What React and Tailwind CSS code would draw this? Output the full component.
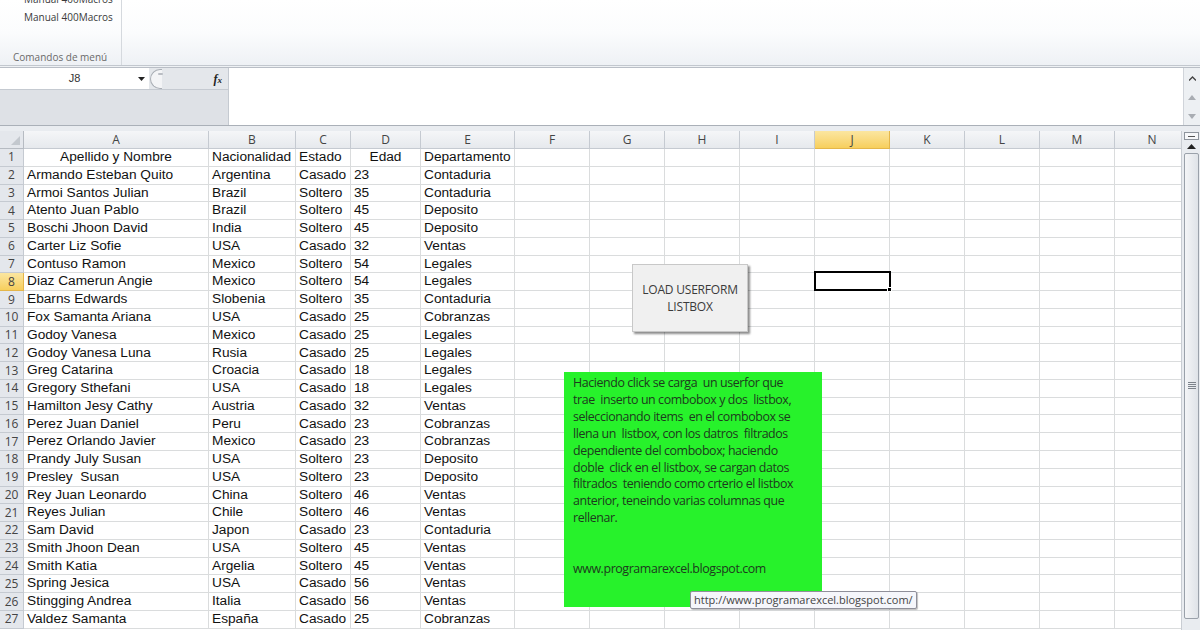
import React from "react";

const data = [
  ["Armando Esteban Quito", "Argentina", "Casado", "23", "Contaduria"],
  ["Armoi Santos Julian", "Brazil", "Soltero", "35", "Contaduria"],
  ["Atento Juan Pablo", "Brazil", "Soltero", "45", "Deposito"],
  ["Boschi Jhoon David", "India", "Soltero", "45", "Deposito"],
  ["Carter Liz Sofie", "USA", "Casado", "32", "Ventas"],
  ["Contuso Ramon", "Mexico", "Soltero", "54", "Legales"],
  ["Diaz Camerun Angie", "Mexico", "Soltero", "54", "Legales"],
  ["Ebarns Edwards", "Slobenia", "Soltero", "35", "Contaduria"],
  ["Fox Samanta Ariana", "USA", "Casado", "25", "Cobranzas"],
  ["Godoy Vanesa", "Mexico", "Casado", "25", "Legales"],
  ["Godoy Vanesa Luna", "Rusia", "Casado", "25", "Legales"],
  ["Greg Catarina", "Croacia", "Casado", "18", "Legales"],
  ["Gregory Sthefani", "USA", "Casado", "18", "Legales"],
  ["Hamilton Jesy Cathy", "Austria", "Casado", "32", "Ventas"],
  ["Perez Juan Daniel", "Peru", "Casado", "23", "Cobranzas"],
  ["Perez Orlando Javier", "Mexico", "Casado", "23", "Cobranzas"],
  ["Prandy July Susan", "USA", "Soltero", "23", "Deposito"],
  ["Presley\u00a0 Susan", "USA", "Soltero", "23", "Deposito"],
  ["Rey Juan Leonardo", "China", "Soltero", "46", "Ventas"],
  ["Reyes Julian", "Chile", "Soltero", "46", "Ventas"],
  ["Sam David", "Japon", "Casado", "23", "Contaduria"],
  ["Smith Jhoon Dean", "USA", "Soltero", "45", "Ventas"],
  ["Smith Katia", "Argelia", "Soltero", "45", "Ventas"],
  ["Spring Jesica", "USA", "Casado", "56", "Ventas"],
  ["Stingging Andrea", "Italia", "Casado", "56", "Ventas"],
  ["Valdez Samanta", "España", "Casado", "25", "Cobranzas"],
];

const cols = ["A", "B", "C", "D", "E", "F", "G", "H", "I", "J", "K", "L", "M", "N"];
const widths = [185, 87, 55, 70, 94, 75, 75, 75, 75, 75, 75, 75, 75, 75];

function Cell({ w, children, align = "left" }) {
  const a = align === "center" ? "justify-center" : "justify-start pl-[3px]";
  return (
    <div
      className={`flex h-full shrink-0 items-center overflow-visible whitespace-nowrap border-r border-b border-[#dadcdd] bg-white ${a}`}
      style={{ width: w }}
    >
      {children}
    </div>
  );
}

export default function App() {
  const header = ["Apellido y Nombre", "Nacionalidad", "Estado", "Edad", "Departamento"];
  return (
    <div
      className="relative h-[630px] w-[1200px] overflow-hidden bg-white"
      style={{ fontFamily: '"Liberation Sans", Arial, sans-serif' }}
    >
      {/* Ribbon */}
      <div className="flex h-[65px] bg-gradient-to-b from-white via-[#fbfcfd] to-[#eef1f5]">
        <div className="relative w-[122px] border-r border-[#d5d9de]" style={{ fontFamily: '"Open Sans", "Liberation Sans", sans-serif' }}>
          <div className="absolute left-[24px] top-[-8px] text-[10px] text-[#3a3a3a]">Manual 400Macros</div>
          <div className="absolute left-[24px] top-[10px] text-[10px] text-[#3a3a3a]">Manual 400Macros</div>
          <div className="absolute left-[13px] top-[50px] text-[10px] text-[#6a6a6a]">Comandos de menú</div>
        </div>
        <div className="flex-1" />
      </div>
      <div className="h-[1px] bg-[#c2c7ce]" />
      <div className="h-[1px] bg-[#eef1f4]" />
      <div className="h-[1px] bg-[#b9bec6]" />

      {/* Formula bar */}
      <div className="flex h-[58px] border-b border-[#aab0b8] bg-[#dfe2e7]">
        <div className="flex w-[229px] flex-col border-r border-[#c5cad1]">
          <div className="flex h-[22px] items-center">
            <div className="relative flex h-full w-[149px] items-center justify-center border-b border-[#c5cad1] bg-white text-[11px] text-[#333]">
              J8
              <svg className="absolute right-[4px] top-[9px]" width="7" height="4" viewBox="0 0 7 4">
                <path d="M0 0h7L3.5 4z" fill="#222" />
              </svg>
            </div>
            <div className="relative flex h-full flex-1 items-center border-b border-[#c5cad1] bg-[#e4e7eb]">
              <div className="ml-[1px] h-[20px] w-[12px] rounded-l-full border-l border-t border-b border-[#a9aeb5] bg-[#f3f4f6]" />
              <div className="absolute left-[9px] top-[5px] h-[2px] w-[5px] rounded-full bg-[#b9bdc3]" />
              <span className="ml-auto mr-[6px] text-[12px] italic font-bold text-[#222]" style={{ fontFamily: '"Liberation Serif", serif' }}>
                f<span className="text-[9px]">x</span>
              </span>
            </div>
          </div>
          <div className="flex-1 bg-[#dee1e6]" />
        </div>
        <div className="flex-1 bg-white" />
        <div className="flex w-[17px] flex-col items-center border-l border-[#d0d4da] bg-[#edf0f3]">
          <svg className="mt-[8px]" width="7" height="5" viewBox="0 0 7 5"><path d="M0 4.5L3.5 1 7 4.5" stroke="#444" strokeWidth="1.4" fill="none" /></svg>
          <svg className="mt-[14px]" width="8" height="5" viewBox="0 0 8 5"><path d="M0 5h8L4 0z" fill="#a9adb3" /></svg>
          <svg className="mt-[14px]" width="8" height="5" viewBox="0 0 8 5"><path d="M0 0h8L4 5z" fill="#a9adb3" /></svg>
        </div>
      </div>
      <div className="h-[5px] bg-[#e9ecf0]" />

      {/* Sheet */}
      <div className="flex">
        <div className="flex-1 overflow-hidden">
          {/* Column header */}
          <div className="flex h-[18px] text-[12px] text-[#444]" style={{ fontFamily: '"Open Sans", "Liberation Sans", sans-serif' }}>
            <div className="relative h-full w-[24px] shrink-0 border-r border-b border-[#b6bbc2] bg-[#e4e7ec]">
              <svg className="absolute bottom-[3px] right-[3px]" width="9" height="9" viewBox="0 0 9 9"><path d="M9 0v9H0z" fill="#c3c8ce" /></svg>
            </div>
            {cols.map((c, i) => (
              <div
                key={c}
                className={`flex h-full shrink-0 items-center justify-center border-r border-b ${
                  c === "J"
                    ? "border-[#e4b64a] bg-gradient-to-b from-[#fbe6a0] to-[#f7cf5c]"
                    : "border-[#c5cad1] bg-gradient-to-b from-[#f5f6f8] to-[#e6e9ed]"
                }`}
                style={{ width: widths[i] }}
              >
                {c}
              </div>
            ))}
          </div>
          {/* Rows */}
          {[header, ...data].map((r, ri) => {
            const n = ri + 1;
            const isHead = ri === 0;
            return (
              <div key={n} className="flex h-[17.77px] text-[13.7px] text-[#111]">
                <div
                  className={`flex h-full w-[24px] shrink-0 items-center justify-center border-r border-b text-[12px] text-[#444] ${
                    n === 8
                      ? "border-[#e4b64a] bg-gradient-to-b from-[#fbe6a0] to-[#f7cf5c]"
                      : "border-[#c5cad1] bg-[#e4e7ec]"
                  }`}
                  style={{ fontFamily: '"Open Sans", "Liberation Sans", sans-serif' }}
                >
                  {n}
                </div>
                <Cell w={widths[0]} align={isHead ? "center" : "left"}>{r[0]}</Cell>
                <Cell w={widths[1]}>{r[1]}</Cell>
                <Cell w={widths[2]}>{r[2]}</Cell>
                <Cell w={widths[3]} align={isHead ? "center" : "left"}>{r[3]}</Cell>
                <Cell w={widths[4]}>{r[4]}</Cell>
                {widths.slice(5).map((w, k) => (
                  <Cell key={k} w={w}>{""}</Cell>
                ))}
              </div>
            );
          })}
        </div>
        {/* Vertical scrollbar */}
        <div className="flex h-[500px] w-[19px] shrink-0 flex-col items-center border-l border-[#c9cdd3] bg-[#e9ecf0]">
          <div className="mt-[1px] flex h-[8px] w-[15px] items-center justify-center border border-[#8e949c] bg-[#f7f8fa]">
            <div className="h-[1px] w-[7px] bg-[#555]" />
          </div>
          <svg className="mt-[4px]" width="9" height="5" viewBox="0 0 9 5"><path d="M0 5h9L4.5 0z" fill="#222" /></svg>
          <div className="relative mt-[4px] h-[466px] w-[15px] rounded-[2px] border border-[#9aa1aa] bg-gradient-to-r from-[#f4f5f7] to-[#dfe3e8]">
            <div className="absolute left-[3px] top-[228px] flex flex-col gap-[1px]">
              <div className="h-[1px] w-[8px] bg-[#7d838b]" />
              <div className="h-[1px] w-[8px] bg-[#7d838b]" />
              <div className="h-[1px] w-[8px] bg-[#7d838b]" />
              <div className="h-[1px] w-[8px] bg-[#7d838b]" />
            </div>
          </div>
        </div>
      </div>

      {/* Selected cell J8 */}
      <div className="absolute left-[814px] top-[271px] h-[20px] w-[77px] border-2 border-black" />
      <div className="absolute left-[887px] top-[287px] h-[5px] w-[5px] border border-white bg-black" />

      {/* Button */}
      <div
        className="absolute left-[632px] top-[264px] flex h-[68px] w-[116px] flex-col items-center justify-center border border-[#c8c8c8] bg-[#f0f0f0] text-[12px] leading-[17px] text-[#3b3b3b] shadow-[2px_2px_2px_rgba(0,0,0,0.45)]"
        style={{ fontFamily: '"Open Sans", "Liberation Sans", sans-serif', letterSpacing: "-0.2px" }}
      >
        <div>LOAD USERFORM</div>
        <div>LISTBOX</div>
      </div>

      {/* Green text box */}
      <div
        className="absolute left-[564px] top-[372px] h-[235px] w-[258px] bg-[#27f22b] pl-[9px] pt-[3px] text-[12.4px] leading-[16.9px] text-[#1d3a1d]"
        style={{ fontFamily: '"Open Sans", "Liberation Sans", sans-serif', letterSpacing: "-0.4px" }}
      >
        <div className="whitespace-nowrap">Haciendo click se carga&nbsp; un userfor que</div>
        <div className="whitespace-nowrap">trae&nbsp; inserto un combobox y dos&nbsp; listbox,</div>
        <div className="whitespace-nowrap">seleccionando items&nbsp; en el combobox se</div>
        <div className="whitespace-nowrap">llena un&nbsp; listbox, con los datros&nbsp; filtrados</div>
        <div className="whitespace-nowrap">dependiente del combobox; haciendo</div>
        <div className="whitespace-nowrap">doble&nbsp; click en el listbox, se cargan datos</div>
        <div className="whitespace-nowrap">filtrados&nbsp; teniendo como crterio el listbox</div>
        <div className="whitespace-nowrap">anterior, teneindo varias columnas que</div>
        <div>rellenar.</div>
        <div>&nbsp;</div>
        <div>&nbsp;</div>
        <div>www.programarexcel.blogspot.com</div>
      </div>

      {/* Tooltip */}
      <div
        className="absolute left-[690px] top-[591px] flex h-[18px] items-center rounded-[2px] border border-[#8f8f9a] bg-[#f5f6fb] px-[3px] text-[11px] text-[#444] shadow-[1px_1px_1px_rgba(0,0,0,0.25)]"
        style={{ fontFamily: '"Open Sans", "Liberation Sans", sans-serif' }}
      >
        http://www.programarexcel.blogspot.com/
      </div>
    </div>
  );
}
